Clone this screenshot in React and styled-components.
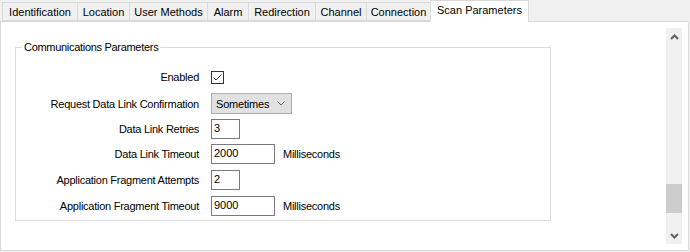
import React from "react";
import styled, { createGlobalStyle } from "styled-components";

const GlobalStyle = createGlobalStyle`
  html, body {
    margin: 0;
    padding: 0;
    background: #f0f0f0;
  }
  body {
    font-family: "Liberation Sans", Arial, sans-serif;
    font-size: 11px;
    color: #000;
  }
`;

const Window = styled.div`
  width: 690px;
  height: 252px;
  background: #f0f0f0;
  overflow: hidden;
`;

const TabStrip = styled.div`
  display: flex;
  align-items: flex-end;
  height: 21px;
  padding-left: 2px;
`;

const Tab = styled.div`
  position: relative;
  box-sizing: border-box;
  width: ${(p) => p.w}px;
  height: ${(p) => (p.active ? 22 : 19)}px;
  margin-left: ${(p) => (p.first ? 0 : -1)}px;
  margin-bottom: ${(p) => (p.active ? -1 : 0)}px;
  z-index: ${(p) => (p.active ? 2 : 1)};
  border: 1px solid #d9d9d9;
  border-bottom: ${(p) => (p.active ? "none" : "1px solid #d9d9d9")};
  background: ${(p) => (p.active ? "#fff" : "#f0f0f0")};
  display: flex;
  align-items: center;
  justify-content: center;
  padding-bottom: ${(p) => (p.active ? 3 : 0)}px;
  font-size: 11px;
  white-space: nowrap;
`;

const Panel = styled.div`
  box-sizing: border-box;
  width: 689px;
  height: 230px;
  border: 1px solid #d9d9d9;
  background: #fff;
  display: flex;
  padding: 6px 6px 6px 14px;
`;

const Content = styled.div`
  flex: 1;
  padding-top: 13px;
`;

const Group = styled.fieldset`
  box-sizing: border-box;
  width: 536px;
  margin: 0;
  padding: 10px 0 1px 0;
  border: 1px solid #dcdcdc;
`;

const Legend = styled.legend`
  margin-left: 6px;
  padding: 0 2px;
  line-height: 13px;
  letter-spacing: -0.3px;
`;

const Row = styled.div`
  display: grid;
  grid-template-columns: 183px auto;
  column-gap: 12px;
  align-items: center;
  height: ${(p) => p.h}px;
`;

const Label = styled.div`
  text-align: right;
  letter-spacing: -0.25px;
  white-space: nowrap;
`;

const Controls = styled.div`
  display: flex;
  align-items: center;
  gap: 8px;
`;

const Check = styled.div`
  box-sizing: border-box;
  width: 13px;
  height: 13px;
  border: 1px solid #333;
  background: #fff;
  display: flex;
  align-items: center;
  justify-content: center;
`;

const Combo = styled.div`
  box-sizing: border-box;
  width: 81px;
  height: 21px;
  border: 1px solid #adadad;
  background: #e1e1e1;
  display: flex;
  align-items: center;
  justify-content: space-between;
  padding: 0 6px 0 4px;
  letter-spacing: -0.2px;
`;

const TextBox = styled.div`
  box-sizing: border-box;
  width: ${(p) => p.w}px;
  height: 20px;
  border: 1px solid #7a7a7a;
  background: #fff;
  padding: 1px 2px;
  line-height: 14px;
`;

const Unit = styled.span`
  letter-spacing: -0.25px;
`;

const ScrollBar = styled.div`
  width: 16px;
  background: #f0f0f0;
  display: flex;
  flex-direction: column;
  align-items: center;
`;

const ArrowBtn = styled.div`
  height: 17px;
  width: 16px;
  display: flex;
  align-items: center;
  justify-content: center;
`;

const Track = styled.div`
  flex: 1;
  width: 16px;
  display: flex;
  flex-direction: column;
  justify-content: flex-end;
  padding-bottom: 14px;
`;

const Thumb = styled.div`
  height: 29px;
  background: #cdcdcd;
`;

const tabs = [
  ["Identification", 76],
  ["Location", 53],
  ["User Methods", 79],
  ["Alarm", 42],
  ["Redirection", 68],
  ["Channel", 52],
  ["Connection", 65],
  ["Scan Parameters", 99],
];

function Chevron({ up }) {
  return (
    <svg width="9" height="6" viewBox="0 0 9 6">
      <path
        d={up ? "M1 5 L4.5 1.5 L8 5" : "M1 1 L4.5 4.5 L8 1"}
        fill="none"
        stroke="#606060"
        strokeWidth="2"
      />
    </svg>
  );
}

export default function App() {
  return (
    <Window>
      <GlobalStyle />
      <TabStrip>
        {tabs.map(([name, w], i) => (
          <Tab key={name} w={w} first={i === 0} active={i === tabs.length - 1}>
            {name}
          </Tab>
        ))}
      </TabStrip>
      <Panel>
        <Content>
          <Group>
            <Legend>Communications Parameters</Legend>
            <Row h={26}>
              <Label>Enabled</Label>
              <Controls>
                <Check>
                  <svg width="11" height="11" viewBox="0 0 11 11">
                    <path d="M1.5 5.5 L4 8 L9.5 2.5" fill="none" stroke="#333" strokeWidth="1" />
                  </svg>
                </Check>
              </Controls>
            </Row>
            <Row h={27}>
              <Label>Request Data Link Confirmation</Label>
              <Controls>
                <Combo>
                  <span>Sometimes</span>
                  <svg width="8" height="5" viewBox="0 0 8 5">
                    <path d="M0.5 0.5 L4 4 L7.5 0.5" fill="none" stroke="#666" strokeWidth="1" />
                  </svg>
                </Combo>
              </Controls>
            </Row>
            <Row h={24}>
              <Label>Data Link Retries</Label>
              <Controls>
                <TextBox w={29}>3</TextBox>
              </Controls>
            </Row>
            <Row h={26}>
              <Label>Data Link Timeout</Label>
              <Controls>
                <TextBox w={64}>2000</TextBox>
                <Unit>Milliseconds</Unit>
              </Controls>
            </Row>
            <Row h={26}>
              <Label>Application Fragment Attempts</Label>
              <Controls>
                <TextBox w={29}>2</TextBox>
              </Controls>
            </Row>
            <Row h={26}>
              <Label>Application Fragment Timeout</Label>
              <Controls>
                <TextBox w={64}>9000</TextBox>
                <Unit>Milliseconds</Unit>
              </Controls>
            </Row>
          </Group>
        </Content>
        <ScrollBar>
          <ArrowBtn>
            <Chevron up />
          </ArrowBtn>
          <Track>
            <Thumb />
          </Track>
          <ArrowBtn>
            <Chevron />
          </ArrowBtn>
        </ScrollBar>
      </Panel>
    </Window>
  );
}
